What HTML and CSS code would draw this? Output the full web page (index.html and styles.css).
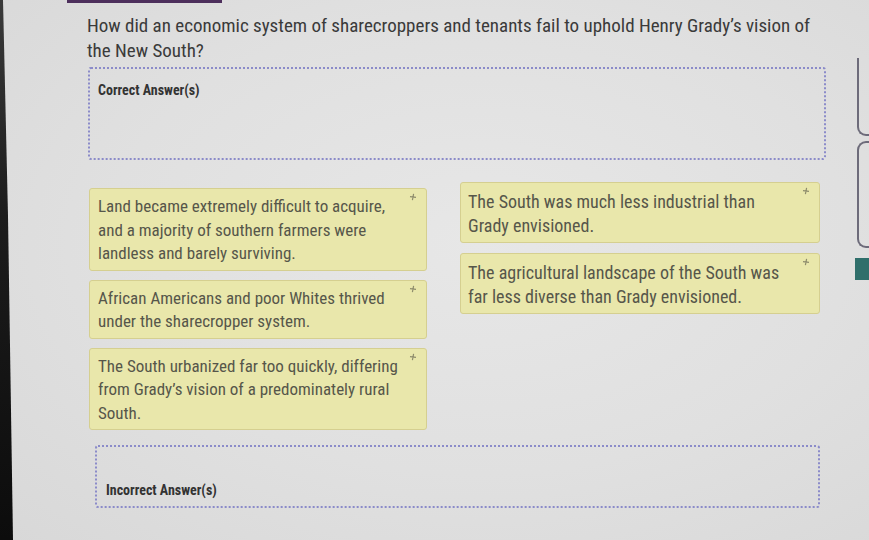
FILE: index.html
```
<!DOCTYPE html>
<html lang="en">
<head>
<meta charset="utf-8">
<title>New South question</title>
<link rel="stylesheet" href="styles.css">
</head>
<body>
<div class="screen">
  <div class="bezel"></div>
  <main class="content">
    <div class="topbar"></div>
    <h1 class="question">How did an economic system of sharecroppers and tenants fail to uphold Henry Grady’s vision of the New South?</h1>

    <section class="dropzone correct">
      <div class="zone-label">Correct Answer(s)</div>
    </section>

    <div class="answers">
      <div class="col col-left">
        <div class="card">Land became extremely difficult to acquire, and a majority of southern farmers were landless and barely surviving.<svg class="pin" viewBox="0 0 8 8"><path d="M4.6 0.8 L3.4 7.2 M1 3.6 L7 4.4"/></svg></div>
        <div class="card">African Americans and poor Whites thrived under the sharecropper system.<svg class="pin" viewBox="0 0 8 8"><path d="M4.6 0.8 L3.4 7.2 M1 3.6 L7 4.4"/></svg></div>
        <div class="card">The South urbanized far too quickly, differing from Grady’s vision of a predominately rural South.<svg class="pin" viewBox="0 0 8 8"><path d="M4.6 0.8 L3.4 7.2 M1 3.6 L7 4.4"/></svg></div>
      </div>
      <div class="col col-right">
        <div class="card wide">The South was much less industrial than Grady envisioned.<svg class="pin" viewBox="0 0 8 8"><path d="M4.6 0.8 L3.4 7.2 M1 3.6 L7 4.4"/></svg></div>
        <div class="card wide">The agricultural landscape of the South was far less diverse than Grady envisioned.<svg class="pin" viewBox="0 0 8 8"><path d="M4.6 0.8 L3.4 7.2 M1 3.6 L7 4.4"/></svg></div>
      </div>
    </div>

    <section class="dropzone incorrect">
      <div class="zone-label">Incorrect Answer(s)</div>
    </section>
  </main>
  <aside class="edge">
    <div class="edge-box edge-a"></div>
    <div class="edge-box edge-b"></div>
    <div class="edge-teal"></div>
  </aside>
</div>
</body>
</html>
```
FILE: styles.css
```
* { box-sizing: border-box; }
html, body { margin: 0; padding: 0; }
body {
  width: 869px;
  height: 540px;
  overflow: hidden;
  background: #dfdfdf;
  font-family: "Roboto", "Open Sans", sans-serif;
  font-stretch: 75%;
  color: #3d3d3d;
}
.screen {
  display: flex;
  height: 540px;
  background: radial-gradient(ellipse at 55% 45%, #e7e7e7 0%, #e0e0e0 55%, #d8d8d8 100%);
}
.bezel {
  width: 13px;
  flex: none;
  background: linear-gradient(to bottom, #3a3a3a 0%, #1c1c1c 40%, #0c0c0c 100%);
  clip-path: polygon(0 0, 3px 0, 8px 40%, 13px 100%, 0 100%);
}
.content {
  flex: none;
  width: 842px;
  padding-left: 74px;
}
.topbar {
  width: 155px;
  height: 3px;
  margin-left: -20px;
  background: #4d2f5c;
}
.question {
  margin: 10px 0 0 0;
  width: 745px;
  font-size: 19px;
  font-weight: 400;
  line-height: 25px;
  color: #3a3a3a;
}
.dropzone {
  border: 2px dotted #8b8bc9;
  border-radius: 3px;
}
.correct {
  margin: 4px 0 0 1px;
  width: 738px;
  height: 93px;
  padding: 12px 0 0 8px;
}
.zone-label {
  font-size: 14px;
  font-weight: 700;
  line-height: 18px;
  color: #333;
}
.answers {
  display: flex;
  gap: 33px;
  margin-top: 22px;
}
.col {
  display: flex;
  flex-direction: column;
}
.col-left {
  width: 338px;
  gap: 9px;
  padding-top: 6px;
  margin-left: 2px;
}
.col-right {
  width: 360px;
  gap: 10px;
}
.card {
  position: relative;
  background: #e9e7ab;
  border: 1px solid #d5cf90;
  border-radius: 3px;
  padding: 6px 22px 4px 8px;
  font-size: 17px;
  line-height: 23.5px;
  color: #56564a;
}
.card.wide {
  padding: 7px 30px 4px 7px;
  font-size: 18px;
  line-height: 24px;
}
.pin {
  position: absolute;
  top: 4px;
  right: 9px;
  width: 8px;
  height: 8px;
  fill: none;
  stroke: #8e8c6c;
  stroke-width: 1.2;
}
.incorrect {
  margin: 15px 0 0 8px;
  width: 725px;
  height: 63px;
  padding: 34px 0 0 9px;
}
.edge {
  flex: none;
  width: 14px;
  padding-top: 58px;
  display: flex;
  flex-direction: column;
  overflow: visible;
}
.edge-box {
  width: 30px;
  border: 2px solid #6d6b7a;
  border-right: none;
  margin-left: 2px;
}
.edge-a {
  height: 78px;
  border-top: none;
  border-radius: 0 0 0 9px;
}
.edge-b {
  height: 107px;
  margin-top: 5px;
  border-radius: 9px 0 0 9px;
}
.edge-teal {
  margin-top: 10px;
  height: 22px;
  width: 30px;
  background: #2f6f6b;
}
```
